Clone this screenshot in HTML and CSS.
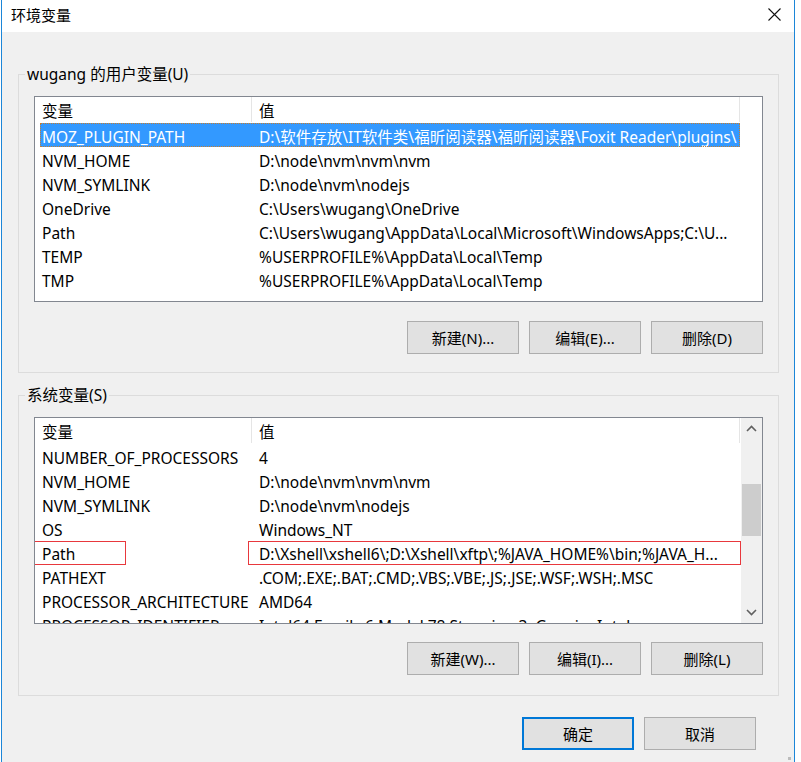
FILE: index.html
```html
<!DOCTYPE html>
<html lang="zh-CN">
<head>
    <meta charset="UTF-8">
    <title>环境变量</title>
    <link rel="stylesheet" href="styles.css">
</head>
<body>
    <div class="window">
        <!-- Title bar -->
        <div class="titlebar">
            <span class="title">环境变量</span>
            <span class="close">
                <svg width="13" height="13" viewBox="0 0 13 13">
                    <path d="M0.5 0.5 L12.5 12.5 M12.5 0.5 L0.5 12.5" stroke="#111" stroke-width="1.1" fill="none"/>
                </svg>
            </span>
        </div>

        <div class="content">
            <!-- User variables -->
            <fieldset class="group">
                <legend>wugang 的用户变量(U)</legend>
                <div class="list">
                    <div class="rows">
                        <div class="row head">
                            <div class="cell name">变量</div>
                            <div class="cell value">值</div>
                        </div>
                        <div class="row selected">
                            <div class="cell name">MOZ_PLUGIN_PATH</div>
                            <div class="cell value">D:\软件存放\IT软件类\福昕阅读器\福昕阅读器\Foxit Reader\plugins\</div>
                        </div>
                        <div class="row">
                            <div class="cell name">NVM_HOME</div>
                            <div class="cell value">D:\node\nvm\nvm\nvm</div>
                        </div>
                        <div class="row">
                            <div class="cell name">NVM_SYMLINK</div>
                            <div class="cell value">D:\node\nvm\nodejs</div>
                        </div>
                        <div class="row">
                            <div class="cell name">OneDrive</div>
                            <div class="cell value">C:\Users\wugang\OneDrive</div>
                        </div>
                        <div class="row">
                            <div class="cell name">Path</div>
                            <div class="cell value">C:\Users\wugang\AppData\Local\Microsoft\WindowsApps;C:\U...</div>
                        </div>
                        <div class="row">
                            <div class="cell name">TEMP</div>
                            <div class="cell value">%USERPROFILE%\AppData\Local\Temp</div>
                        </div>
                        <div class="row">
                            <div class="cell name">TMP</div>
                            <div class="cell value">%USERPROFILE%\AppData\Local\Temp</div>
                        </div>
                    </div>
                </div>
                <div class="button-group">
                    <button>新建(N)...</button>
                    <button>编辑(E)...</button>
                    <button>删除(D)</button>
                </div>
            </fieldset>

            <!-- System variables -->
            <fieldset class="group">
                <legend>系统变量(S)</legend>
                <div class="list">
                    <div class="rows">
                        <div class="row head">
                            <div class="cell name">变量</div>
                            <div class="cell value">值</div>
                        </div>
                        <div class="row">
                            <div class="cell name">NUMBER_OF_PROCESSORS</div>
                            <div class="cell value">4</div>
                        </div>
                        <div class="row">
                            <div class="cell name">NVM_HOME</div>
                            <div class="cell value">D:\node\nvm\nvm\nvm</div>
                        </div>
                        <div class="row">
                            <div class="cell name">NVM_SYMLINK</div>
                            <div class="cell value">D:\node\nvm\nodejs</div>
                        </div>
                        <div class="row">
                            <div class="cell name">OS</div>
                            <div class="cell value">Windows_NT</div>
                        </div>
                        <div class="row">
                            <div class="cell name">Path</div>
                            <div class="cell value">D:\Xshell\xshell6\;D:\Xshell\xftp\;%JAVA_HOME%\bin;%JAVA_H...</div>
                            <span class="mark mark-name"></span>
                            <span class="mark mark-value"></span>
                        </div>
                        <div class="row">
                            <div class="cell name">PATHEXT</div>
                            <div class="cell value">.COM;.EXE;.BAT;.CMD;.VBS;.VBE;.JS;.JSE;.WSF;.WSH;.MSC</div>
                        </div>
                        <div class="row">
                            <div class="cell name">PROCESSOR_ARCHITECTURE</div>
                            <div class="cell value">AMD64</div>
                        </div>
                        <div class="row">
                            <div class="cell name">PROCESSOR_IDENTIFIER</div>
                            <div class="cell value">Intel64 Family 6 Model 78 Stepping 3, GenuineIntel</div>
                        </div>
                    </div>
                    <div class="scrollbar">
                        <span class="arrow">
                            <svg width="11" height="7" viewBox="0 0 11 7"><path d="M1 6 L5.5 1.5 L10 6" stroke="#606060" stroke-width="1.6" fill="none"/></svg>
                        </span>
                        <div class="track"><div class="thumb"></div></div>
                        <span class="arrow">
                            <svg width="11" height="7" viewBox="0 0 11 7"><path d="M1 1 L5.5 5.5 L10 1" stroke="#606060" stroke-width="1.6" fill="none"/></svg>
                        </span>
                    </div>
                </div>
                <div class="button-group">
                    <button>新建(W)...</button>
                    <button>编辑(I)...</button>
                    <button>删除(L)</button>
                </div>
            </fieldset>

            <div class="dialog-buttons">
                <button class="default">确定</button>
                <button>取消</button>
            </div>
        </div>
        <span class="grip"></span>
    </div>
</body>
</html>
```
FILE: styles.css
```css
* {
    box-sizing: border-box;
    margin: 0;
    padding: 0;
}

body {
    font-family: "Noto Sans", "Noto Sans CJK SC", sans-serif;
    font-size: 15.5px;
    color: #000;
    background-color: #fff;
    height: 762px;
    overflow: hidden;
}

.window {
    position: relative;
    margin-left: 1px;
    width: 794px;
    height: 762px;
    border-left: 1px solid #1c86d8;
    border-right: 1px solid #1c86d8;
    background-color: #f0f0f0;
}

.titlebar {
    height: 32px;
    background-color: #fff;
    display: flex;
    align-items: center;
    justify-content: space-between;
    padding: 0 13px 0 9px;
}

.title {
    font-size: 15px;
    line-height: 20px;
    padding-bottom: 2px;
}

.close {
    display: flex;
    margin-top: -3px;
}

.content {
    padding: 32px 15px 0 16px;
}

.group {
    border: 1px solid #dcdcdc;
    padding: 12px 15px 18px 15px;
    min-width: 0;
}

.group + .group {
    margin-top: 12px;
    padding-bottom: 20px;
}

.group + .group .list {
    height: 207px;
}

.group legend {
    margin-left: -9px;
    padding: 0 2px;
    line-height: 20px;
}

.list {
    border: 1px solid #828790;
    background-color: #fff;
    height: 206px;
    padding-left: 5px;
    overflow: hidden;
    display: flex;
}

.rows {
    width: 700px;
    flex: none;
}

.row {
    display: flex;
    height: 24px;
    line-height: 24px;
    white-space: nowrap;
    position: relative;
}

.row.head {
    height: 26px;
    line-height: 26px;
}

.cell {
    overflow: hidden;
    padding-top: 2px;
}

.cell.name {
    width: 212px;
    padding-left: 2px;
}

.cell.value {
    flex: 1;
    padding-left: 7px;
}

.row.head .cell {
    border-right: 1px solid #e5e5e5;
    height: 25px;
    padding-top: 1px;
}

.row.selected {
    background-color: #3399ff;
    color: #fff;
    outline: 1px dotted #c77d2e;
    outline-offset: -1px;
}

.mark {
    position: absolute;
    top: 1px;
    height: 24px;
    border: 1px solid #e8383d;
}

.mark-name {
    left: -8px;
    width: 94px;
}

.mark-value {
    left: 208px;
    width: 493px;
}

.scrollbar {
    width: 21px;
    margin-left: 1px;
    background-color: #f0f0f0;
    display: flex;
    flex-direction: column;
}

.arrow {
    height: 21px;
    display: flex;
    align-items: center;
    justify-content: center;
}

.track {
    flex: 1;
    padding-top: 45px;
}

.thumb {
    height: 52px;
    background-color: #cdcdcd;
    margin: 0 1px;
}

.button-group {
    display: flex;
    justify-content: flex-end;
    gap: 10px;
    margin-top: 19px;
}

.group + .group .button-group {
    margin-top: 18px;
}

button {
    font-family: inherit;
    font-size: 15px;
    color: #000;
    width: 112px;
    height: 33px;
    background-color: #e1e1e1;
    border: 1px solid #adadad;
}

.dialog-buttons {
    display: flex;
    justify-content: flex-end;
    gap: 10px;
    margin-top: 21px;
    padding-right: 23px;
}

button.default {
    border: 2px solid #0078d7;
}

.grip {
    position: absolute;
    right: 3px;
    bottom: 2px;
    width: 3px;
    height: 3px;
    background-color: #bcbcbc;
}
```
